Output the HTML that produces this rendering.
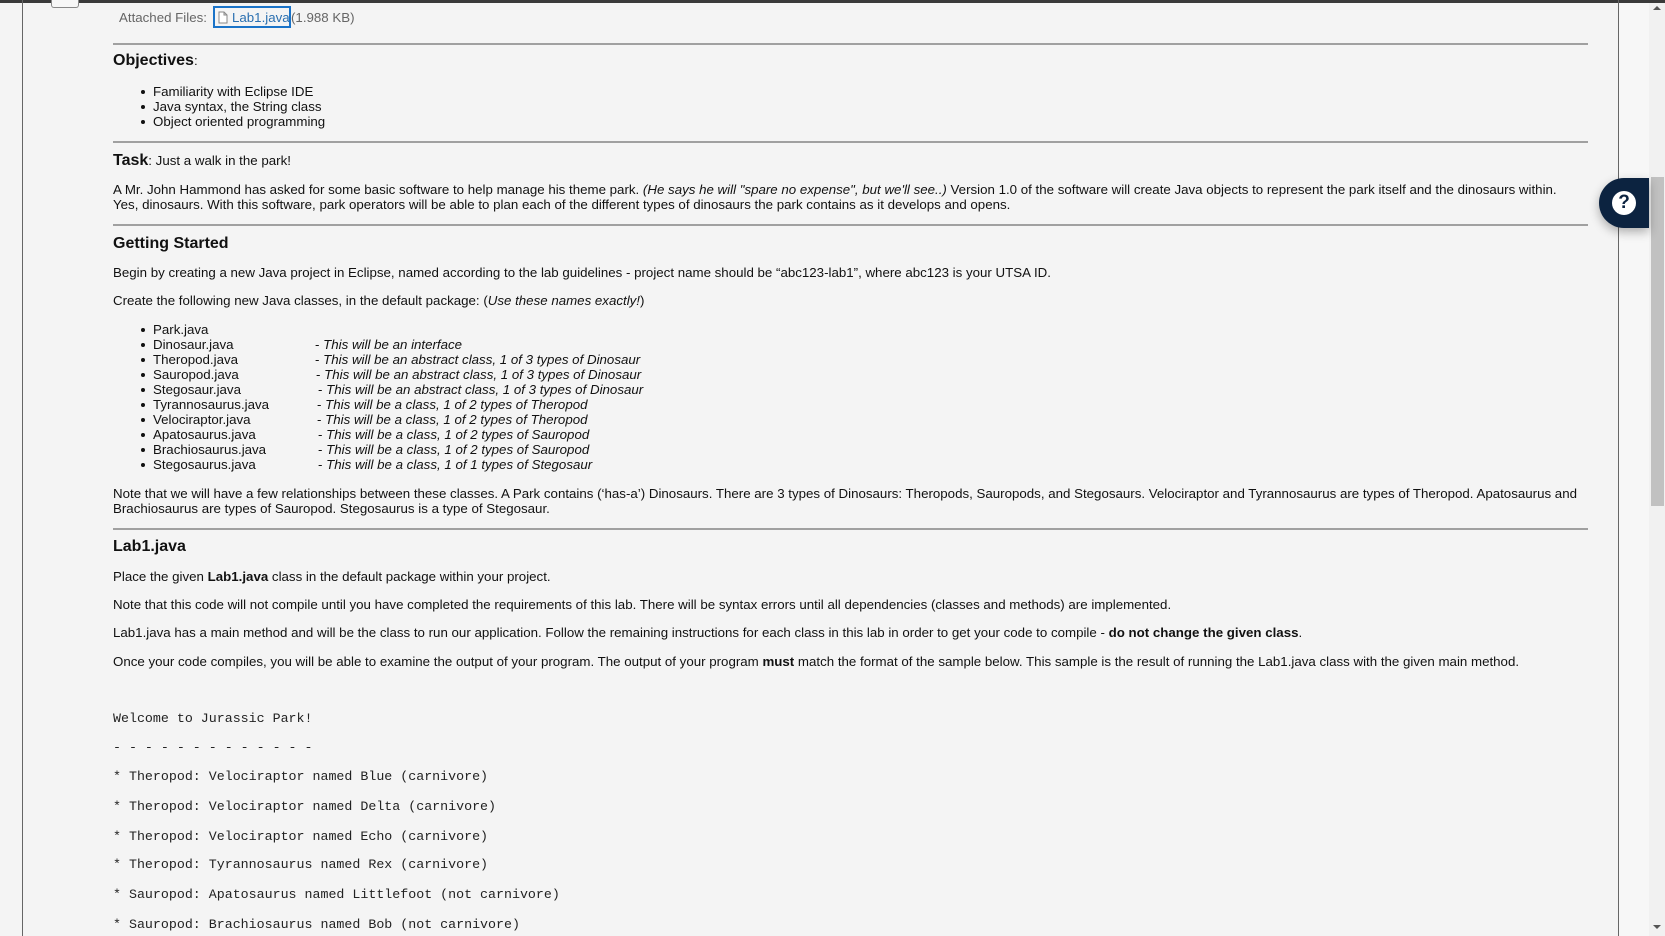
<!DOCTYPE html>
<html><head><meta charset="utf-8"><style>
*{margin:0;padding:0;box-sizing:border-box}
html,body{width:1665px;height:936px;overflow:hidden;background:#f4f4f4;font-family:"Liberation Sans",Arial,sans-serif;color:#111;font-size:13.3px}
.topbar{position:absolute;left:0;top:0;width:1665px;height:3px;background:#3a3a3a}
.lline{position:absolute;left:22px;top:0;width:1px;height:936px;background:#666}
.rline{position:absolute;left:1618px;top:0;width:1px;height:936px;background:#666}
.rarea{position:absolute;left:1619px;top:3px;width:30px;height:933px;background:#f7f7f7}
.tab{position:absolute;left:51px;top:0;width:28px;height:8px;border:1px solid #888;border-top:none;border-radius:0 0 3px 3px;background:#f7f7f7}
.sb{position:absolute;left:1649px;top:3px;width:16px;height:933px;background:#f1f1f1}
.thumb{position:absolute;left:1651px;top:177px;width:13px;height:329px;background:#c1c1c1}
.help{position:absolute;left:1599px;top:178px;width:50px;height:50px;background:#0c2340;border-radius:25px 0 0 25px;box-shadow:0 4px 10px rgba(0,0,0,.3)}
.help span{position:absolute;left:13px;top:13px;width:24px;height:24px;border-radius:12px;background:#fff;color:#0c2340;font-weight:bold;font-size:19px;text-align:center;line-height:24px}
.t{position:absolute;white-space:nowrap;line-height:15px}
.hr{position:absolute;left:113px;width:1475px;height:2px;background:#a0a0a0}
h{font-weight:bold;font-size:16px}
.b{position:absolute;left:141px;width:4px;height:4px;border-radius:2px;background:#111}
.c{position:absolute;left:113px;font-family:"Liberation Mono","Courier New",monospace;font-size:13.3px;white-space:pre;line-height:15px;color:#222}
i{font-style:italic}
</style></head><body>
<div class="topbar"></div><div class="lline"></div><div class="rarea"></div><div class="rline"></div><div class="tab"></div>
<div class="sb"></div><div class="thumb"></div>
<div style="position:absolute;left:1653px;top:6px;width:0;height:0;border-left:4px solid transparent;border-right:4px solid transparent;border-bottom:4px solid #555"></div>
<div style="position:absolute;left:1653px;top:925px;width:0;height:0;border-left:4px solid transparent;border-right:4px solid transparent;border-top:4px solid #555"></div>
<div class="help"><span>?</span></div>

<div class="t" style="left:119px;top:10px;color:#666">Attached Files:</div>
<div style="position:absolute;left:213px;top:6px;width:78px;height:22px;border:2px solid #1a73c8"></div>
<svg style="position:absolute;left:218px;top:11px" width="10" height="13"><path d="M1 1h5l3 3v8H1z M6 1v3h3" fill="#fff" stroke="#888"/></svg>
<div class="t" style="left:232px;top:10px;color:#2a6fb0">Lab1.java</div>
<div class="t" style="left:291px;top:10px;color:#666">(1.988 KB)</div>
<div class="hr" style="top:43px"></div>
<div class="t" style="left:113px;top:53px"><h>Objectives</h>:</div>
<div class="b" style="top:90px"></div><div class="t" style="left:153px;top:84px">Familiarity with Eclipse IDE</div>
<div class="b" style="top:105px"></div><div class="t" style="left:153px;top:99px">Java syntax, the String class</div>
<div class="b" style="top:120px"></div><div class="t" style="left:153px;top:114px">Object oriented programming</div>
<div class="hr" style="top:141px"></div>
<div class="t" style="left:113px;top:153px"><h>Task</h>: Just a walk in the park!</div>
<div class="t" style="left:113px;top:182px">A Mr. John Hammond has asked for some basic software to help manage his theme park. <i>(He says he will "spare no expense", but we'll see..)</i> Version 1.0 of the software will create Java objects to represent the park itself and the dinosaurs within.</div>
<div class="t" style="left:113px;top:197px">Yes, dinosaurs. With this software, park operators will be able to plan each of the different types of dinosaurs the park contains as it develops and opens.</div>
<div class="hr" style="top:224px"></div>
<div class="t" style="left:113px;top:236px"><h>Getting Started</h></div>
<div class="t" style="left:113px;top:265px">Begin by creating a new Java project in Eclipse, named according to the lab guidelines - project name should be “abc123-lab1”, where abc123 is your UTSA ID.</div>
<div class="t" style="left:113px;top:293px">Create the following new Java classes, in the default package: (<i>Use these names exactly!</i>)</div>

<div class="b" style="top:328px"></div><div class="t" style="left:153px;top:322px">Park.java</div>
<div class="b" style="top:343px"></div><div class="t" style="left:153px;top:337px">Dinosaur.java</div><div class="t" style="left:315px;top:337px">- <i>This will be an interface</i></div>
<div class="b" style="top:358px"></div><div class="t" style="left:153px;top:352px">Theropod.java</div><div class="t" style="left:315px;top:352px">- <i>This will be an abstract class, 1 of 3 types of Dinosaur</i></div>
<div class="b" style="top:373px"></div><div class="t" style="left:153px;top:367px">Sauropod.java</div><div class="t" style="left:316px;top:367px">- <i>This will be an abstract class, 1 of 3 types of Dinosaur</i></div>
<div class="b" style="top:388px"></div><div class="t" style="left:153px;top:382px">Stegosaur.java</div><div class="t" style="left:318px;top:382px">- <i>This will be an abstract class, 1 of 3 types of Dinosaur</i></div>
<div class="b" style="top:403px"></div><div class="t" style="left:153px;top:397px">Tyrannosaurus.java</div><div class="t" style="left:317px;top:397px">- <i>This will be a class, 1 of 2 types of Theropod</i></div>
<div class="b" style="top:418px"></div><div class="t" style="left:153px;top:412px">Velociraptor.java</div><div class="t" style="left:317px;top:412px">- <i>This will be a class, 1 of 2 types of Theropod</i></div>
<div class="b" style="top:433px"></div><div class="t" style="left:153px;top:427px">Apatosaurus.java</div><div class="t" style="left:318px;top:427px">- <i>This will be a class, 1 of 2 types of Sauropod</i></div>
<div class="b" style="top:448px"></div><div class="t" style="left:153px;top:442px">Brachiosaurus.java</div><div class="t" style="left:318px;top:442px">- <i>This will be a class, 1 of 2 types of Sauropod</i></div>
<div class="b" style="top:463px"></div><div class="t" style="left:153px;top:457px">Stegosaurus.java</div><div class="t" style="left:318px;top:457px">- <i>This will be a class, 1 of 1 types of Stegosaur</i></div>

<div class="t" style="left:113px;top:486px">Note that we will have a few relationships between these classes. A Park contains (‘has-a’) Dinosaurs. There are 3 types of Dinosaurs: Theropods, Sauropods, and Stegosaurs. Velociraptor and Tyrannosaurus are types of Theropod. Apatosaurus and</div>
<div class="t" style="left:113px;top:501px">Brachiosaurus are types of Sauropod. Stegosaurus is a type of Stegosaur.</div>
<div class="hr" style="top:528px"></div>
<div class="t" style="left:113px;top:539px"><h>Lab1.java</h></div>
<div class="t" style="left:113px;top:569px">Place the given <b>Lab1.java</b> class in the default package within your project.</div>
<div class="t" style="left:113px;top:597px">Note that this code will not compile until you have completed the requirements of this lab. There will be syntax errors until all dependencies (classes and methods) are implemented.</div>
<div class="t" style="left:113px;top:625px">Lab1.java has a main method and will be the class to run our application. Follow the remaining instructions for each class in this lab in order to get your code to compile - <b>do not change the given class</b>.</div>
<div class="t" style="left:113px;top:654px">Once your code compiles, you will be able to examine the output of your program. The output of your program <b>must</b> match the format of the sample below. This sample is the result of running the Lab1.java class with the given main method.</div>

<div class="c" style="top:711px">Welcome to Jurassic Park!</div>
<div class="c" style="top:740px">- - - - - - - - - - - - -</div>
<div class="c" style="top:769px">* Theropod: Velociraptor named Blue (carnivore)</div>
<div class="c" style="top:799px">* Theropod: Velociraptor named Delta (carnivore)</div>
<div class="c" style="top:829px">* Theropod: Velociraptor named Echo (carnivore)</div>
<div class="c" style="top:857px">* Theropod: Tyrannosaurus named Rex (carnivore)</div>
<div class="c" style="top:887px">* Sauropod: Apatosaurus named Littlefoot (not carnivore)</div>
<div class="c" style="top:917px">* Sauropod: Brachiosaurus named Bob (not carnivore)</div>
</body></html>
